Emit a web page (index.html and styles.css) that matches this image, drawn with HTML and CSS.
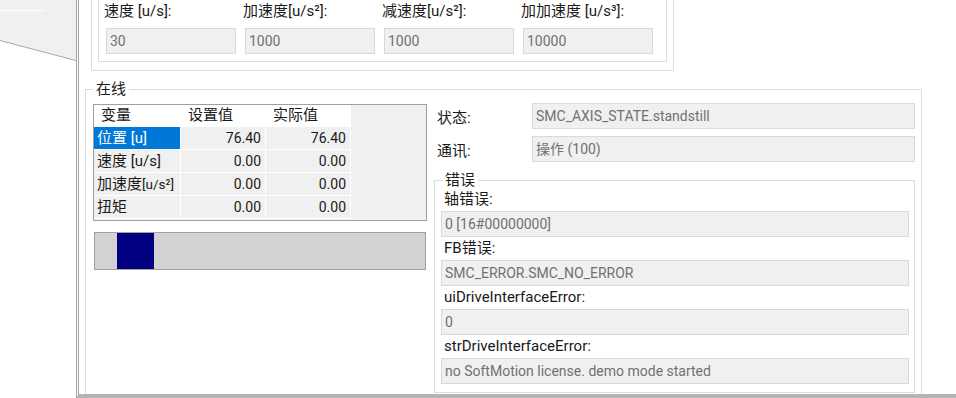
FILE: index.html
```html
<!DOCTYPE html>
<html>
    <head>
        <meta charset="utf-8">
        <title>Axis online</title>

        <link rel="stylesheet" href="styles.css">
    </head>

    <body>

        <div class="screen">
            <!-- left edge of the tab strip -->
            <div class="side">
                <svg width="76" height="398" viewBox="0 0 76 398">
                    <polygon points="0,0 76,0 76,60 0,40" fill="#f0f0f0"/>
                    <line x1="0" y1="40.5" x2="76" y2="60.5" stroke="#a6a6a6"/>
                    <line x1="0" y1="10.5" x2="45" y2="10.5" stroke="#ffffff"/>
                </svg>
            </div>

            <div class="main">

                <!-- motion parameters -->
                <div class="params-outer">
                    <div class="params">
                        <label>速度 [u/s]:</label>
                        <label>加速度[u/s²]:</label>
                        <label>减速度[u/s²]:</label>
                        <label>加加速度 [u/s³]:</label>
                        <div class="field">30</div>
                        <div class="field">1000</div>
                        <div class="field">1000</div>
                        <div class="field">10000</div>
                    </div>
                </div>

                <!-- online -->
                <div class="group online">
                    <div class="group-title">在线</div>

                    <div class="online-body">
                        <div class="left-col">
                            <div class="vars">
                                <div class="vars-grid">
                                    <div class="hd">变量</div>
                                    <div class="hd">设置值</div>
                                    <div class="hd">实际值</div>

                                    <div class="name sel">位置 [u]</div>
                                    <div class="num">76.40</div>
                                    <div class="num">76.40</div>

                                    <div class="name">速度 [u/s]</div>
                                    <div class="num">0.00</div>
                                    <div class="num">0.00</div>

                                    <div class="name">加速度<small>[u/s²]</small></div>
                                    <div class="num">0.00</div>
                                    <div class="num">0.00</div>

                                    <div class="name">扭矩</div>
                                    <div class="num">0.00</div>
                                    <div class="num">0.00</div>
                                </div>
                            </div>

                            <div class="bar">
                                <div class="bar-fill"></div>
                            </div>
                        </div>

                        <div class="right-col">
                            <div class="state-row">
                                <span>状态:</span>
                                <div class="field">SMC_AXIS_STATE.standstill</div>
                            </div>
                            <div class="state-row">
                                <span>通讯:</span>
                                <div class="field">操作 (100)</div>
                            </div>

                            <div class="group errors">
                                <div class="group-title">错误</div>

                                <div class="err-label">轴错误:</div>
                                <div class="field">0 [16#00000000]</div>

                                <div class="err-label">FB错误:</div>
                                <div class="field">SMC_ERROR.SMC_NO_ERROR</div>

                                <div class="err-label">uiDriveInterfaceError:</div>
                                <div class="field">0</div>

                                <div class="err-label">strDriveInterfaceError:</div>
                                <div class="field">no SoftMotion license. demo mode started</div>
                            </div>
                        </div>
                    </div>
                </div>

            </div>
        </div>

    </body>
</html>
```

FILE: styles.css
```css
* {
    box-sizing: border-box;
}

body {
    margin: 0;
    background: #fff;
    color: #1a1a1a;
    font-family: Roboto, "Noto Sans CJK SC", sans-serif;
    font-size: 15px;
}

.screen {
    display: flex;
    width: 956px;
    height: 398px;
    overflow: hidden;
}

/* Tab strip edge */

.side {
    flex: none;
    width: 76px;
}

.side svg {
    display: block;
}

.main {
    flex: 1;
    height: 398px;
    border-left: 3px double #a3a3a3;
    border-bottom: 4px solid #b4b4b4;
    overflow: hidden;
}

/* Inputs */

.field {
    height: 26px;
    padding: 0 3px;
    background: #f0f0f0;
    border: 1px solid #d9d9d9;
    color: #707070;
    font-size: 14px;
    line-height: 24px;
    white-space: nowrap;
    overflow: hidden;
}

/* Motion parameters */

.params-outer {
    margin-left: 12px;
    width: 583px;
    padding: 0 6px 8px;
    border: 1px solid #dcdcdc;
    border-top: 0;
}

.params {
    display: grid;
    grid-template-columns: repeat(4, 130px);
    column-gap: 9px;
    row-gap: 7px;
    padding: 1px 7px 7px;
    border: 1px solid #dcdcdc;
    border-top: 0;
}

.params label {
    margin-left: -2px;
    line-height: 20px;
    white-space: nowrap;
}

/* Group boxes */

.group {
    border: 1px solid #dcdcdc;
}

.group-title {
    width: fit-content;
    margin-top: -10px;
    padding: 0 3px;
    background: #fff;
    line-height: 18px;
}

.online {
    height: 400px;
    margin: 18px 34px 0 6px;
    padding: 0 6px 0 7px;
}

.online-body {
    display: grid;
    grid-template-columns: 334px 1fr;
    column-gap: 7px;
    margin-top: 5px;
}

/* Variables table */

.vars {
    height: 117px;
    margin-top: 1px;
    background: #f0f0f0;
    border: 1px solid #a0a0a0;
}

.vars-grid {
    display: grid;
    grid-template-columns: 86px 84px 84px;
    grid-template-rows: 21px repeat(4, 22px);
    gap: 1px;
    width: fit-content;
    padding: 0 1px 1px 0;
    background: #fff;
}

.hd {
    padding-left: 7px;
    background: #fff;
    line-height: 21px;
}

.name {
    padding-left: 3px;
    background: #f0f0f0;
    line-height: 22px;
    white-space: nowrap;
    overflow: hidden;
}

.name small {
    font-size: 13.5px;
}

.sel {
    background: #0078d7;
    color: #fff;
}

.num {
    padding-right: 4px;
    background: #f0f0f0;
    font-size: 14px;
    line-height: 22px;
    text-align: right;
}

.bar {
    height: 38px;
    margin: 11px 1px 0 1px;
    padding-left: 22px;
    background: #d2d2d2;
    border: 1px solid #a0a0a0;
}

.bar-fill {
    width: 37px;
    height: 100%;
    background: #000080;
}

/* Status + errors */

.state-row {
    display: grid;
    grid-template-columns: 98px 1fr;
    align-items: center;
    height: 26px;
}

.state-row + .state-row {
    margin-top: 7px;
}

.state-row span {
    padding-left: 3px;
}

.errors {
    margin-top: 18px;
    padding: 0 5px 8px 6px;
}

.errors .group-title {
    margin-left: 1px;
    margin-bottom: -1px;
}

.err-label {
    padding-left: 3px;
    line-height: 23px;
    white-space: nowrap;
}
```
